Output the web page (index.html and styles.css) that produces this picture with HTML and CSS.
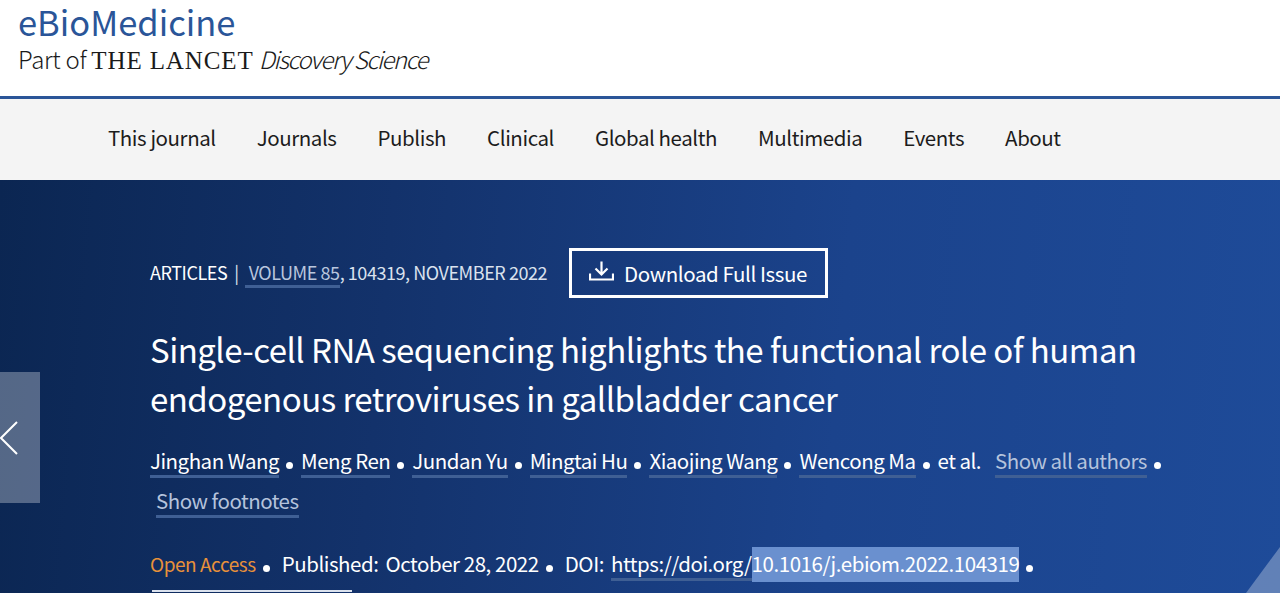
FILE: index.html
```html
<!DOCTYPE html>
<html lang="en">
<head>
    <meta charset="UTF-8">
    <meta name="viewport" content="width=device-width, initial-scale=1.0">
    <title>Single-cell RNA sequencing highlights the functional role of human endogenous retroviruses in gallbladder cancer</title>
    <link rel="stylesheet" href="styles.css">
</head>
<body>
    <header class="site-header">
        <div class="logo-title">eBioMedicine</div>
        <div class="logo-sub">Part of <span class="lancet">THE LANCET</span> <em>Discovery Science</em></div>
    </header>

    <nav class="main-nav">
        <a href="#">This journal</a>
        <a href="#">Journals</a>
        <a href="#">Publish</a>
        <a href="#">Clinical</a>
        <a href="#">Global health</a>
        <a href="#">Multimedia</a>
        <a href="#">Events</a>
        <a href="#">About</a>
    </nav>

    <section class="hero">
        <button class="prev-btn" aria-label="Previous article">
            <svg width="20" height="34" viewBox="0 0 20 34"><path d="M17 1 L1 17 L17 33" fill="none" stroke="#fff" stroke-width="2"/></svg>
        </button>
        <div class="corner-shape"></div>

        <div class="meta-row">
            <span class="meta-text"><span class="meta-type">ARTICLES</span><span class="meta-sep">|</span><a href="#" class="meta-volume">VOLUME 85</a>, 104319, NOVEMBER 2022</span>
            <a href="#" class="download-btn">
                <svg width="25" height="20" viewBox="0 0 25 20"><path d="M12.5 0.5 V13 M6.5 7.5 L12.5 13.5 L18.5 7.5 M1 12.5 V18.5 H24 V12.5" fill="none" stroke="#fff" stroke-width="2.2"/></svg>
                Download Full Issue
            </a>
        </div>

        <h1>Single-cell RNA sequencing highlights the functional role of human endogenous retroviruses in gallbladder cancer</h1>

        <div class="authors">
            <a href="#">Jinghan Wang</a><i class="dot"></i>
            <a href="#">Meng Ren</a><i class="dot"></i>
            <a href="#">Jundan Yu</a><i class="dot"></i>
            <a href="#">Mingtai Hu</a><i class="dot"></i>
            <a href="#">Xiaojing Wang</a><i class="dot"></i>
            <a href="#">Wencong Ma</a><i class="dot"></i>
            <span>et al.</span>
            <a href="#" class="muted show-all">Show all authors</a><i class="dot"></i>
        </div>
        <div class="footnotes"><a href="#" class="muted">Show footnotes</a></div>

        <div class="pub-row">
            <span class="open-access">Open Access</span><i class="dot"></i>
            <span class="published">Published:</span>
            <span>October 28, 2022</span><i class="dot"></i>
            <span class="published">DOI:</span>
            <a href="#" class="doi">https://doi.org/<span class="selected">10.1016/j.ebiom.2022.104319</span></a><i class="dot"></i>
        </div>
        <div class="next-box"></div>
    </section>
</body>
</html>
```

FILE: styles.css
```css
body {
    margin: 0;
    padding: 0;
    height: 593px;
    overflow: hidden;
    font-family: "Noto Sans CJK SC", "Noto Sans", sans-serif;
    background: #fff;
}

a {
    color: inherit;
    text-decoration: none;
}

.site-header {
    height: 96px;
    padding: 1px 0 0 18px;
    background: #fff;
    box-sizing: border-box;
}

.logo-title {
    font-size: 34.5px;
    line-height: 40px;
    color: #2a5598;
}

.logo-sub {
    margin-top: 4px;
    font-size: 24px;
    font-weight: 300;
    line-height: 28px;
    color: #1a1a1a;
    letter-spacing: -0.3px;
}

.logo-sub em {
    letter-spacing: -1.5px;
}

.lancet {
    font-family: "Liberation Serif", serif;
    font-size: 25px;
    letter-spacing: 0.9px;
}

.main-nav {
    display: flex;
    align-items: center;
    gap: 41px;
    height: 75px;
    padding: 0 0 6px 108px;
    border-top: 3px solid #2a5598;
    background: #f4f4f4;
    font-size: 20.5px;
    letter-spacing: -0.43px;
    color: #1c1c1c;
}

.hero {
    position: relative;
    height: 413px;
    padding-left: 150px;
    overflow: hidden;
    background: linear-gradient(95deg, #0b2652 0%, #13326b 30%, #1b438c 65%, #1e4b99 100%);
    color: #fff;
}

.prev-btn {
    position: absolute;
    left: 0;
    top: 192px;
    width: 40px;
    height: 131px;
    padding: 0;
    border: none;
    background: rgba(255, 255, 255, 0.3);
}

.prev-btn svg {
    display: block;
}

.corner-shape {
    position: absolute;
    right: 0;
    bottom: 0;
    width: 34px;
    height: 46px;
    background: rgba(255, 255, 255, 0.3);
    clip-path: polygon(100% 0, 100% 100%, 0 100%);
}

.meta-row {
    display: flex;
    align-items: center;
    height: 50px;
    margin-top: 68px;
}

.meta-text {
    margin-top: -2px;
    font-size: 18px;
    color: #dbe2ee;
    letter-spacing: -0.44px;
}

.meta-type {
    color: #fff;
}

.meta-sep {
    margin: 0 6px 0 7px;
}

.meta-volume {
    padding-left: 4px;
    border-bottom: 3px solid #3f5f94;
    color: #b9c6de;
}

.download-btn {
    display: flex;
    align-items: center;
    gap: 10px;
    width: 259px;
    height: 50px;
    box-sizing: border-box;
    margin-left: 22px;
    padding: 0 0 0 17px;
    border: 3px solid #fff;
    font-size: 20.5px;
    letter-spacing: -0.42px;
}

.download-btn svg {
    margin-top: -5px;
}

h1 {
    margin: 27px 0 0;
    width: 1000px;
    font-size: 33px;
    font-weight: 400;
    line-height: 49px;
    letter-spacing: -0.53px;
}

.authors,
.footnotes,
.pub-row {
    font-size: 20.5px;
    line-height: 30px;
    letter-spacing: -0.5px;
}

.authors {
    margin-top: 22px;
    display: flex;
    align-items: baseline;
}

.authors a,
.footnotes a,
.doi {
    border-bottom: 3px solid #3f5f94;
}

.dot {
    display: inline-block;
    width: 7px;
    height: 7px;
    margin: 0 8px 4px 7px;
    border-radius: 50%;
    background: #fff;
}

.muted {
    color: #b5c3dc;
}

.show-all {
    margin-left: 14px;
}

.footnotes {
    margin: 7px 0 0 6px;
}

.pub-row {
    display: flex;
    align-items: baseline;
    margin-top: 33px;
    letter-spacing: -0.45px;
}

.pub-row .dot {
    margin-right: 12px;
}

.open-access {
    font-size: 19px;
    color: #e8913a;
}

.published {
    margin-right: 7px;
}

.selected {
    background: #6a90cf;
    padding: 1px 0 4px;
}

.next-box {
    width: 200px;
    height: 2px;
    margin: 9px 0 0 2px;
    background: #dbe2ee;
}
```
